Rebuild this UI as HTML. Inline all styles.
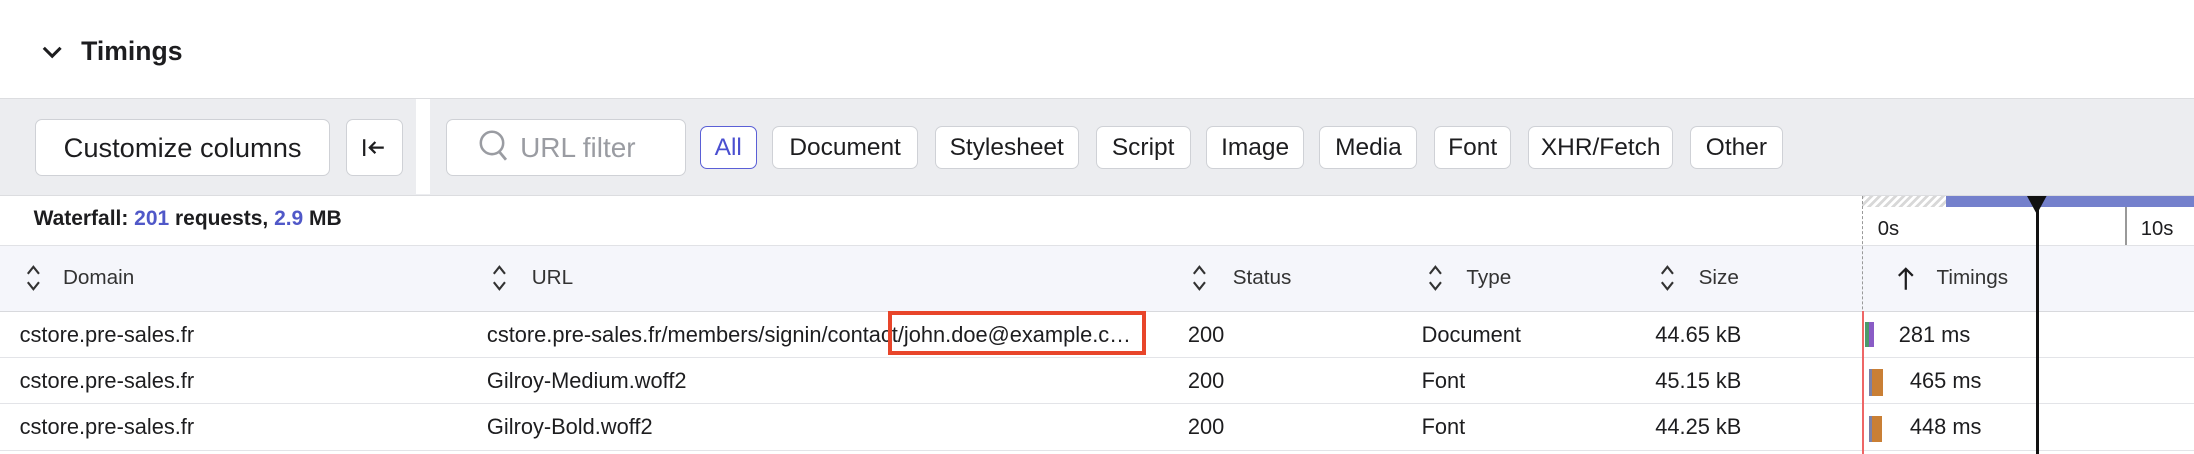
<!DOCTYPE html>
<html><head><style>
html,body{margin:0;padding:0;background:#fff;overflow:hidden}
body{width:2194px;height:454px}
#w{zoom:1.3992;width:1568px;height:325px;position:relative;font-family:"Liberation Sans",Arial,sans-serif;color:#1d1d1f;font-size:15px}
.a{position:absolute}
.btn{position:absolute;background:#fff;border:1px solid #cfd1d6;border-radius:5px;box-sizing:border-box;display:flex;align-items:center;justify-content:center}
.chip{top:90px;height:31px;font-size:17.5px}
.hd{top:176px;height:46px;line-height:46px;font-size:14.8px;color:#333}
.row{position:absolute;left:0;width:1568px;height:33px;border-bottom:1px solid #e3e4e8;box-sizing:border-box}
.c{position:absolute;top:0;line-height:33px;font-size:15.6px;white-space:nowrap}
.ud{position:absolute;top:189px}
</style></head><body><div id="w">
<svg width="0" height="0" style="position:absolute"><defs><symbol id="ud" viewBox="0 0 12 20"><path d="M2 7l4-5 4 5M2 13l4 5 4-5" stroke="#333" stroke-width="1.5" fill="none"/></symbol></defs></svg>
<svg class="a" style="left:29px;top:32px" width="16" height="12" viewBox="0 0 16 12"><path d="M2 2l6 6 6-6" stroke="#1d1d1f" stroke-width="2.2" fill="none"/></svg>
<div class="a" style="left:58px;top:26px;font-size:19px;font-weight:bold">Timings</div>

<div class="a" style="left:0;top:70px;width:1568px;height:70px;background:#ecedf0;border-top:1px solid #dcdde0;border-bottom:1px solid #dcdde0;box-sizing:border-box"></div>
<div class="a" style="left:297px;top:71px;width:10px;height:68px;background:#fff"></div>
<div class="btn" style="left:25px;top:85px;width:211px;height:41px;font-size:19.5px">Customize columns</div>
<div class="btn" style="left:247px;top:85px;width:41px;height:41px"><svg width="20" height="18" viewBox="0 0 20 18"><path d="M3 3v12M17 9H7M11 5L7 9l4 4" stroke="#1d1d1f" stroke-width="1.6" fill="none"/></svg></div>
<div class="btn" style="left:319px;top:85px;width:171px;height:41px;justify-content:flex-start;padding-left:22px;color:#9a9ca2;font-size:20px"><svg width="24" height="26" viewBox="0 0 24 26" style="margin-right:6px"><circle cx="10" cy="10" r="8" stroke="#9a9ca2" stroke-width="1.8" fill="none"/><path d="M15 16l5 6" stroke="#9a9ca2" stroke-width="2" fill="none"/></svg>URL filter</div>
<div class="btn chip" style="left:500px;width:41px;border-color:#5a5fd6;color:#4a4fd0">All</div>
<div class="btn chip" style="left:552px;width:104px">Document</div>
<div class="btn chip" style="left:668px;width:103px">Stylesheet</div>
<div class="btn chip" style="left:783px;width:68px">Script</div>
<div class="btn chip" style="left:862px;width:70px">Image</div>
<div class="btn chip" style="left:943px;width:70px">Media</div>
<div class="btn chip" style="left:1025px;width:55px">Font</div>
<div class="btn chip" style="left:1092px;width:104px">XHR/Fetch</div>
<div class="btn chip" style="left:1208px;width:66px">Other</div>

<div class="a" style="left:24px;top:148px;font-size:15px;font-weight:bold">Waterfall: <span style="color:#5058c8">201</span> requests, <span style="color:#5058c8">2.9</span> MB</div>

<div class="a" style="left:1331px;top:140px;width:60px;height:8px;background:repeating-linear-gradient(135deg,#d8d8d8 0 2px,#fff 2px 4px)"></div>
<div class="a" style="left:1391px;top:140px;width:177px;height:8px;background:#7480cc"></div>
<div class="a" style="left:1519px;top:148px;width:1px;height:28px;background:#999"></div>
<div class="a" style="left:1342px;top:156px;font-size:14.5px">0s</div>
<div class="a" style="left:1530px;top:156px;font-size:14.5px">10s</div>

<div class="a" style="left:0;top:175px;width:1568px;height:48px;background:#f5f6fb;border-top:1px solid #e1e2e6;border-bottom:1px solid #d8d9dd;box-sizing:border-box"></div>
<svg class="ud" style="left:18px" width="12" height="20"><use href="#ud"/></svg><div class="a hd" style="left:45px">Domain</div>
<svg class="ud" style="left:351px" width="12" height="20"><use href="#ud"/></svg><div class="a hd" style="left:380px">URL</div>
<svg class="ud" style="left:851px" width="12" height="20"><use href="#ud"/></svg><div class="a hd" style="left:881px">Status</div>
<svg class="ud" style="left:1020px" width="12" height="20"><use href="#ud"/></svg><div class="a hd" style="left:1048px">Type</div>
<svg class="ud" style="left:1186px" width="12" height="20"><use href="#ud"/></svg><div class="a hd" style="left:1214px">Size</div>
<svg class="a" style="left:1355px;top:190px" width="14" height="18" viewBox="0 0 14 18"><path d="M7 17V2M2 7l5-5 5 5" stroke="#1d1d1f" stroke-width="1.6" fill="none"/></svg>
<div class="a hd" style="left:1384px">Timings</div>

<div class="row" style="top:223px"><div class="c" style="left:14px">cstore.pre-sales.fr</div><div class="c" style="left:348px">cstore.pre-sales.fr/members/signin/contact/john.doe@example.c…</div><div class="c" style="left:849px">200</div><div class="c" style="left:1016px">Document</div><div class="c" style="left:1183px">44.65 kB</div><div class="c" style="left:1357px">281 ms</div>
<div class="a" style="left:1333px;top:7px;width:3px;height:18px;background:#4c9a6b"></div><div class="a" style="left:1336px;top:7px;width:3px;height:18px;background:#8a5cc6"></div></div>
<div class="row" style="top:256px"><div class="c" style="left:14px">cstore.pre-sales.fr</div><div class="c" style="left:348px">Gilroy-Medium.woff2</div><div class="c" style="left:849px">200</div><div class="c" style="left:1016px">Font</div><div class="c" style="left:1183px">45.15 kB</div><div class="c" style="left:1365px">465 ms</div>
<div class="a" style="left:1336px;top:8px;width:2px;height:19px;background:#7b80a8"></div><div class="a" style="left:1338px;top:8px;width:8px;height:19px;background:#c97f35"></div></div>
<div class="row" style="top:289px"><div class="c" style="left:14px">cstore.pre-sales.fr</div><div class="c" style="left:348px">Gilroy-Bold.woff2</div><div class="c" style="left:849px">200</div><div class="c" style="left:1016px">Font</div><div class="c" style="left:1183px">44.25 kB</div><div class="c" style="left:1365px">448 ms</div>
<div class="a" style="left:1336px;top:8px;width:2px;height:19px;background:#7b80a8"></div><div class="a" style="left:1338px;top:8px;width:7px;height:19px;background:#c97f35"></div></div>

<div class="a" style="left:635px;top:222px;width:184px;height:32px;border:3px solid #e8452a;box-sizing:border-box"></div>
<div class="a" style="left:1331px;top:140px;width:0;height:185px;border-left:1px dashed #999"></div>
<div class="a" style="left:1331px;top:222px;width:1px;height:103px;background:#e66"></div>
<div class="a" style="left:1455px;top:140px;width:2px;height:185px;background:#111"></div>
<svg class="a" style="left:1449px;top:140px" width="14" height="14" viewBox="0 0 14 14"><path d="M0 0h14L7 13z" fill="#111"/></svg>
</div></body></html>
